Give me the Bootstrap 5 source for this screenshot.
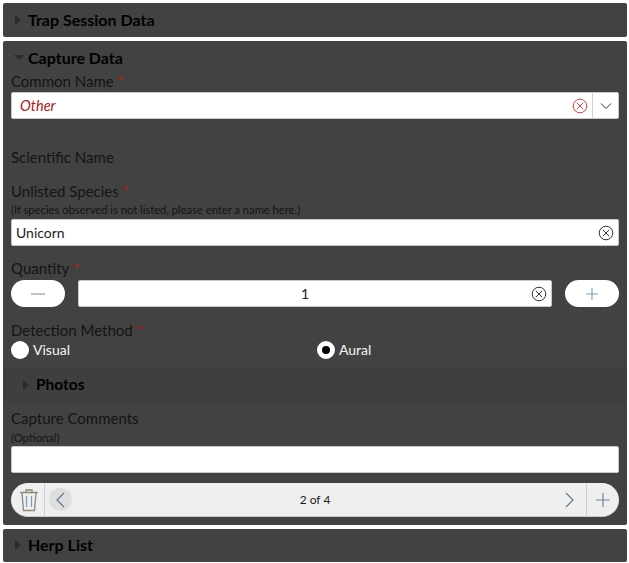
<!DOCTYPE html>
<html lang="en">
<head>
<meta charset="utf-8">
<title>Capture Data</title>
<link href="https://cdn.jsdelivr.net/npm/bootstrap@5.3.0/dist/css/bootstrap.min.css" rel="stylesheet">
<style>
html,body{height:563px;overflow:hidden}
body{background:#fff;font-family:Lato,"Noto Sans",sans-serif;font-size:15px;color:#151515;padding:3px 2px 0 3px}
.sheet{display:flex;flex-direction:column;gap:4px}
.panel{background:#424242;border-radius:2px}
.panel-head{height:34px;display:flex;align-items:center;padding-left:12px;gap:7px;font-weight:700;font-size:16px;color:#000}
.panel-open .panel-head{height:33px}
.panel-last .panel-head{height:33px;padding-bottom:2px}
.panel-body{padding:0 8px 8px;height:451px;display:flex;flex-direction:column}
.tri-r{width:0;height:0;border-style:solid;border-width:5px 0 5px 6px;border-color:transparent transparent transparent #2c2c2c}
.tri-d{width:0;height:0;border-style:solid;border-width:5px 5px 0;border-color:#2c2c2c transparent transparent;margin-right:-3px;margin-left:-1px}
.lbl{font-size:15px;line-height:18px;color:#141414}
.req{color:#c01212}
.hint{font-size:11.2px;line-height:13px;color:#141414}
.inp{background:#fff;height:27px;border:1px solid #c8c8c8;border-radius:2px;display:flex;align-items:center;color:#1d1d1d;font-size:14px}
.other{color:#b01818;font-style:italic;font-size:14.5px}
.pill{width:54px;height:27px;background:#fff;border-radius:14px;display:flex;align-items:center;justify-content:center;flex:none}
.radio-dot{width:18px;height:18px;background:#fff;border-radius:50%;display:inline-block;flex:none}
.radio-on{background:#000;border:5px solid #fff}
.radio-text{color:#f4f4f4;font-size:14px;line-height:18px}
.photos{height:35px;background:#3f3f3f;margin:0 -8px;padding-left:20px;display:flex;align-items:center;gap:7px;font-weight:700;font-size:15.5px;color:#000}
.pager{height:34px;background:#efefef;border-radius:17px;border-bottom:1px solid #c9c9c9;display:flex;align-items:center;font-size:12px;color:#1d1d1d}
.pager-bin{width:34px;height:100%;border-right:1px solid #cfcfcf;display:flex;align-items:center;justify-content:center;flex:none;padding-left:2px}
.pager-prev{width:23px;height:23px;border-radius:50%;background:#dedede;display:flex;align-items:center;justify-content:center;margin-left:4px;flex:none}
.pager-next{width:34px;display:flex;justify-content:center;flex:none}
.pager-add{width:33px;height:100%;border-left:1px solid #cfcfcf;display:flex;align-items:center;justify-content:center;flex:none}
.gap-a{margin-top:3px}
</style>
</head>
<body>
<div class="sheet">
  <section class="panel"><div class="panel-head"><span class="tri-r"></span><span>Trap Session Data</span></div></section>
  <section class="panel panel-open">
    <div class="panel-head"><span class="tri-d"></span><span>Capture Data</span></div>
    <div class="panel-body">
      <div class="lbl" style="margin-top:-2px">Common Name <span class="req">*</span></div>
      <div class="inp" style="margin-top:2px">
        <span class="other flex-grow-1 ps-2">Other</span>
        <svg width="16" height="16" viewBox="0 0 16 16" fill="none" stroke="#d9403c" class="me-1"><circle cx="8" cy="8" r="6.8"/><path d="M4.8 4.8l6.4 6.4M11.2 4.8l-6.4 6.4"/></svg>
        <span class="d-flex align-items-center justify-content-center h-100 border-start" style="width:26px;border-left:1px solid #d0d0d0!important">
          <svg width="12" height="8" viewBox="0 0 12 8" fill="none" stroke="#333"><path d="M1 1.5l5 5 5-5"/></svg>
        </span>
      </div>
      <div class="lbl" style="margin-top:29px">Scientific Name</div>
      <div class="lbl" style="margin-top:16px">Unlisted Species <span class="req">*</span></div>
      <div class="hint" style="margin-top:3px">(If species observed is not listed, please enter a name here.)</div>
      <div class="inp" style="margin-top:3px">
        <span class="flex-grow-1 ps-1">Unicorn</span>
        <svg width="16" height="16" viewBox="0 0 16 16" fill="none" stroke="#2b3440" class="me-1"><circle cx="8" cy="8" r="6.8"/><path d="M4.8 4.8l6.4 6.4M11.2 4.8l-6.4 6.4"/></svg>
      </div>
      <div class="lbl" style="margin-top:13px">Quantity <span class="req">*</span></div>
      <div class="d-flex align-items-center gap-a" style="gap:13px">
        <span class="pill"><svg width="14" height="2" viewBox="0 0 14 2"><path d="M0 1h14" stroke="#9a9a9a" stroke-width="1.2"/></svg></span>
        <div class="inp flex-grow-1 position-relative">
          <span class="flex-grow-1 text-center">1</span>
          <svg width="16" height="16" viewBox="0 0 16 16" fill="none" stroke="#2b3440" class="me-1"><circle cx="8" cy="8" r="6.8"/><path d="M4.8 4.8l6.4 6.4M11.2 4.8l-6.4 6.4"/></svg>
        </div>
        <span class="pill"><svg width="12" height="12" viewBox="0 0 12 12"><path d="M0 6h12M6 0v12" stroke="#7d9bbd" stroke-width="1.1"/></svg></span>
      </div>
      <div class="lbl" style="margin-top:14px">Detection Method <span class="req">*</span></div>
      <div class="row g-0" style="margin-top:2px">
        <div class="col-6 d-flex align-items-center gap-1"><span class="radio-dot"></span><span class="radio-text">Visual</span></div>
        <div class="col-6 d-flex align-items-center gap-1" style="padding-left:2px"><span class="radio-dot radio-on"></span><span class="radio-text">Aural</span></div>
      </div>
      <div class="photos" style="margin-top:8px"><span class="tri-r"></span><span>Photos</span></div>
      <div class="lbl" style="margin-top:7px">Capture Comments</div>
      <div class="hint" style="margin-top:4px">(Optional)</div>
      <div class="inp" style="margin-top:2px"></div>
      <div class="pager" style="margin-top:10px">
        <span class="pager-bin">
          <svg width="20" height="24" viewBox="0 0 20 24" fill="none" stroke="#8f8a78"><path d="M1 4.5h18M7 4V2h6v2M3 5l1.5 17.5h11L17 5" stroke-width="1.3"/><path d="M7.5 8v11M12.5 8v11" stroke="#7d9bbd" stroke-width="1.2"/></svg>
        </span>
        <span class="pager-prev"><svg width="9" height="16" viewBox="0 0 9 16" fill="none" stroke="#5e7286"><path d="M8 1L1 8l7 7" stroke-width="1.1"/></svg></span>
        <span class="flex-grow-1 text-center" style="padding-left:6px">2 of 4</span>
        <span class="pager-next"><svg width="9" height="16" viewBox="0 0 9 16" fill="none" stroke="#5e7286"><path d="M1 1l7 7-7 7" stroke-width="1.1"/></svg></span>
        <span class="pager-add"><svg width="14" height="14" viewBox="0 0 14 14"><path d="M0 7h14M7 0v14" stroke="#6f8397" stroke-width="1.2"/></svg></span>
      </div>
    </div>
  </section>
  <section class="panel panel-last"><div class="panel-head"><span class="tri-r"></span><span>Herp List</span></div></section>
</div>
</body>
</html>
